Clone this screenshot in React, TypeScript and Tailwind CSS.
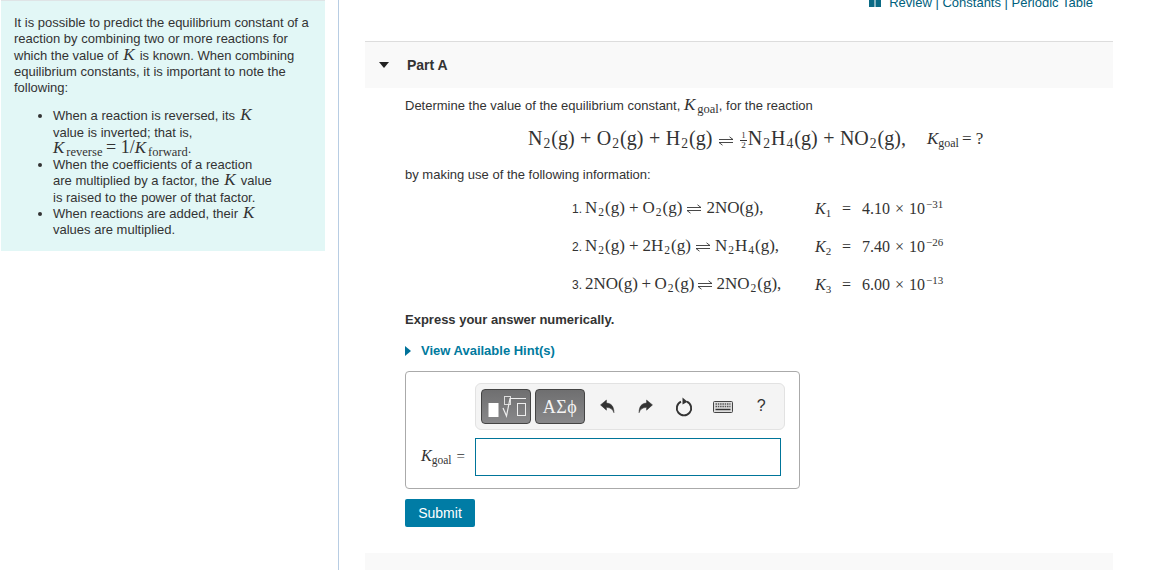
import type { ReactNode } from "react";

const serif = "font-['Liberation_Serif',serif]";

function K({ sub }: { sub?: string }) {
  return (
    <span className={`${serif} text-[17px] leading-[0] whitespace-nowrap`}>
      <i className={sub ? "pr-[2px]" : "px-[1.5px]"}>K</i>
      {sub && <span className="text-[12.5px] relative top-[3px]">{sub}</span>}
    </span>
  );
}

function S({ children }: { children: ReactNode }) {
  return <span className="text-[0.68em] relative top-[0.2em] mx-[1px]">{children}</span>;
}

function Plus({ gap = "mx-[5.5px]" }: { gap?: string }) {
  return <span className={gap}>+</span>;
}

function Harpoons({ gap = "mx-[6px]" }: { gap?: string }) {
  return (
    <svg width="16" height="10" viewBox="0 0 16 10" className={`inline-block ${gap}`} fill="none" stroke="#333" strokeWidth="0.9">
      <path d="M1 3.5H15M15 3.5L11.5 0.8" />
      <path d="M15 6.5H1M1 6.5L4.5 9.2" />
    </svg>
  );
}

function Half() {
  return (
    <span className="inline-flex flex-col items-center align-middle text-[9px] leading-[9px] mr-[1px]">
      <span className="border-b border-[#333] px-[1px]">1</span>
      <span>2</span>
    </span>
  );
}

function Gas() {
  return <span>(g)</span>;
}

const rows: { no: string; eq: ReactNode; k: string; val: string; exp: string }[] = [
  {
    no: "1.",
    eq: (
      <>
        N<S>2</S><Gas /><Plus gap="mx-[4px]" />O<S>2</S><Gas /><Harpoons gap="mx-[4px]" />2NO<Gas />,
      </>
    ),
    k: "1",
    val: "4.10",
    exp: "−31",
  },
  {
    no: "2.",
    eq: (
      <>
        N<S>2</S><Gas /><Plus gap="mx-[4px]" />2H<S>2</S><Gas /><Harpoons gap="mx-[4px]" />N<S>2</S>H<S>4</S><Gas />,
      </>
    ),
    k: "2",
    val: "7.40",
    exp: "−26",
  },
  {
    no: "3.",
    eq: (
      <>
        2NO<Gas /><Plus gap="mx-[3.5px]" />O<S>2</S><Gas /><Harpoons gap="mx-[3px]" />2NO<S>2</S><Gas />,
      </>
    ),
    k: "3",
    val: "6.00",
    exp: "−13",
  },
];

function ToolIcon({ children }: { children: ReactNode }) {
  return <span className="w-[38.5px] flex items-center justify-center">{children}</span>;
}

export default function App() {
  return (
    <div className="w-[1158px] h-[570px] overflow-hidden bg-white flex text-[13px] leading-[16.25px] text-[#333] font-['Liberation_Sans',sans-serif]">
      {/* left column */}
      <div className="w-[339px] h-full shrink-0 border-r border-[#b8cde3] pl-[1px] pr-[13px]">
        <div className="h-[251px] bg-[#e2f7f6] border-t border-[#dfe4e6] px-[13px] pt-[14px]">
          <p>
            It is possible to predict the equilibrium constant of a reaction by combining two or more
            reactions for which the value of <K /> is known. When combining equilibrium constants, it is
            important to note the following:
          </p>
          <ul className="list-disc mt-[12px] pl-[39px] w-[270px]">
            <li>
              When a reaction is reversed, its <K />
              <br />
              value is inverted; that is,
              <br />
              <span className="whitespace-nowrap">
                <K sub="reverse" /> <span className={`${serif} text-[18px] leading-[0]`}>= 1/</span>
                <K sub="forward" />.
              </span>
            </li>
            <li>
              When the coefficients of a reaction
              <br />
              are multiplied by a factor, the <K /> value
              <br />
              is raised to the power of that factor.
            </li>
            <li>
              When reactions are added, their <K />
              <br />
              values are multiplied.
            </li>
          </ul>
        </div>
      </div>

      {/* right column */}
      <div className="w-[748px] ml-[26px] shrink-0">
        <div className="h-[41px] flex justify-end items-start -mt-[5px] text-[#00607c] pr-[20px]">
          <span className="flex items-center gap-[8px]">
            <svg width="12" height="8" viewBox="0 0 12 8" fill="#0b6a85">
              <rect x="0" y="0" width="5.5" height="8" />
              <rect x="6.5" y="0" width="5.5" height="8" />
            </svg>
            <span>Review | Constants | Periodic Table</span>
          </span>
        </div>
        <div className="mt-[5px] h-[47px] bg-[#f9f9f9] border-t border-[#dddddd] flex items-center">
          <svg width="10" height="6" viewBox="0 0 10 6" className="ml-[14px]" fill="#222">
            <path d="M0 0H10L5 6Z" />
          </svg>
          <span className="ml-[18px] font-bold text-[14px]">Part A</span>
        </div>

        <div className="pl-[40px] pt-[10px]">
          <p>
            Determine the value of the equilibrium constant, <K sub="goal" />, for the reaction
          </p>
          <div className={`${serif} text-[20px] leading-[22px] mt-[13px] ml-[123px] flex items-center whitespace-nowrap`}>
            <span>
              N<S>2</S><Gas /><Plus />O<S>2</S><Gas /><Plus />H<S>2</S><Gas /><Harpoons /><Half />N<S>2</S>H<S>4</S><Gas /><Plus />NO<S>2</S><Gas />,
            </span>
            <span className="ml-[21px] text-[17px]">
              <i>K</i><span className="text-[12px] relative top-[3px]">goal</span>
              <span className="ml-[3px]">= ?</span>
            </span>
          </div>
          <p className="mt-[15px]">by making use of the following information:</p>

          <div className="mt-[14px] ml-[167px] grid grid-cols-[243px_auto] gap-y-[14px] whitespace-nowrap">
            {rows.map((r) => (
              <div key={r.no} className="contents">
                <div className="h-[24px] flex items-center">
                  <span className="mr-[3px] text-[12px]">{r.no}</span>
                  <span className={`${serif} text-[17px]`}>{r.eq}</span>
                </div>
                <div className={`${serif} h-[24px] flex items-center text-[16px]`}>
                  <span className="w-[27px]">
                    <i>K</i><span className="text-[11px] relative top-[3px]">{r.k}</span>
                  </span>
                  <span>=</span>
                  <span className="ml-[11px]">
                    {r.val}
                    <span className="mx-[5px]">×</span>10
                  </span>
                  <span className="text-[11px] relative -top-[5px] ml-[1px]">{r.exp}</span>
                </div>
              </div>
            ))}
          </div>

          <p className="mt-[14px] font-bold">Express your answer numerically.</p>
          <div className="mt-[15px] flex items-center text-[#007a9e] font-bold">
            <svg width="6" height="10" viewBox="0 0 6 10" className="mr-[10px]" fill="#00729a">
              <path d="M0 0L6 5L0 10Z" />
            </svg>
            View Available Hint(s)
          </div>

          <div className="mt-[12px] w-[395px] h-[118px] border border-[#aaaaaa] rounded-[4px] pl-[15px] pt-[11px]">
            <div className="ml-[54px] w-[310px] h-[47px] bg-[#f4f4f4] border border-[#e2e2e2] rounded-[6px] flex items-center pl-[5px]">
              <span className="w-[50px] h-[35px] rounded-[4px] border border-[#444] bg-gradient-to-b from-[#6f6f70] to-[#88888a] flex items-center justify-center">
                <svg width="42" height="28" viewBox="0 0 42 28" fill="none">
                  <rect x="3.5" y="10" width="10" height="14" fill="#fff" />
                  <rect x="19.5" y="3.5" width="6" height="8" stroke="#ddd" />
                  <path d="M18 15L21.5 23L25 5.5H41" stroke="#eee" strokeWidth="1.2" />
                  <rect x="32.5" y="10.5" width="8" height="12" stroke="#eee" />
                </svg>
              </span>
              <span className={`${serif} w-[50px] h-[35px] ml-[4px] rounded-[4px] border border-[#444] bg-gradient-to-b from-[#6f6f70] to-[#88888a] flex items-center justify-center text-[#f4f4f4] text-[18px] tracking-[0.5px] leading-none`}>
                ΑΣϕ
              </span>
              <span className="flex items-center ml-[3px]">
                <ToolIcon>
                  <svg width="15" height="15" viewBox="0 0 14 14" fill="#333" stroke="#333" strokeWidth="0.5">
                    <path d="M0.5 5.5L6 1V3.8C10.5 4 13 6.8 13 12.8C12 9.8 10 8 6 7.8V10.4Z" />
                  </svg>
                </ToolIcon>
                <ToolIcon>
                  <svg width="15" height="15" viewBox="0 0 14 14" fill="#333" stroke="#333" strokeWidth="0.5">
                    <path d="M13.5 5.5L8 1V3.8C3.5 4 1 6.8 1 12.8C2 9.8 4 8 8 7.8V10.4Z" />
                  </svg>
                </ToolIcon>
                <ToolIcon>
                  <svg width="18" height="20" viewBox="0 0 18 20" fill="none">
                    <path d="M6 4.6A7.2 7.2 0 1 0 12 4.6" stroke="#333" strokeWidth="1.9" />
                    <path d="M7.5 0.5L12.5 4.8L7.5 7.5Z" fill="#333" />
                  </svg>
                </ToolIcon>
                <ToolIcon>
                  <svg width="20" height="12" viewBox="0 0 20 12" fill="none">
                    <rect x="0.5" y="0.5" width="19" height="11" rx="1" fill="#ddd" stroke="#444" />
                    <path d="M2.5 3H17.5M2.5 5.5H17.5" stroke="#555" strokeWidth="1.3" strokeDasharray="1.5 0.8" />
                    <path d="M2.5 8.5H17.5" stroke="#333" strokeWidth="1.4" />
                  </svg>
                </ToolIcon>
                <ToolIcon>
                  <span className="text-[16px] text-[#333]">?</span>
                </ToolIcon>
              </span>
            </div>
            <div className="flex items-center mt-[8px]">
              <span className="w-[54px] whitespace-nowrap">
                <span className={`${serif} text-[16px]`}>
                  <i>K</i><span className="text-[11.5px] relative top-[3px]">goal</span>
                </span>
                <span className={`${serif} text-[15px] ml-[5px]`}>=</span>
              </span>
              <input className="w-[306px] h-[38px] border border-[#00759a] bg-white outline-none" />
            </div>
          </div>

          <button className="mt-[10px] w-[70px] h-[28px] bg-[#007ca5] rounded-[2px] text-white text-[14px] flex items-center justify-center">
            Submit
          </button>
        </div>

        <div className="mt-[26px] h-[40px] bg-[#f9f9f9]" />
      </div>
    </div>
  );
}
